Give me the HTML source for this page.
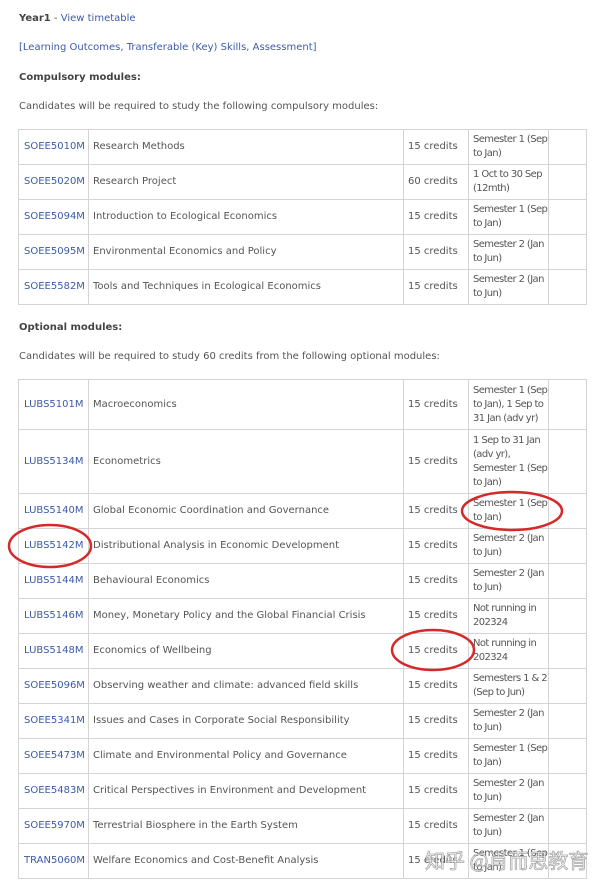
<!DOCTYPE html><html><head><meta charset="utf-8"><style>
body{margin:0;background:#fff;font-family:"DejaVu Sans","Liberation Sans",sans-serif;font-size:10px;color:#555;width:600px;height:887px;position:relative;overflow:hidden}
.t{position:absolute;left:19px;white-space:nowrap}
a{color:#3b5aa8;text-decoration:none}
b{color:#444}
table{position:absolute;left:18px;border-collapse:collapse;width:569px;table-layout:fixed}
td{border:1px solid #d4d4d4;padding:0 4px;vertical-align:middle;line-height:14px;font-size:10px;white-space:nowrap;overflow:hidden}
td.c1{color:#3b5aa8;padding-left:5px}
td:nth-child(4){padding-left:4px;padding-right:0;letter-spacing:-0.6px}
</style></head><body>
<div class="t" style="top:13px"><b>Year1</b> - <a>View timetable</a></div>
<div class="t" style="top:42px"><a>[Learning Outcomes, Transferable (Key) Skills, Assessment]</a></div>
<div class="t" style="top:72px"><b>Compulsory modules:</b></div>
<div class="t" style="top:101px">Candidates will be required to study the following compulsory modules:</div>
<table style="top:129px"><colgroup><col style="width:70px"><col style="width:315px"><col style="width:65px"><col style="width:80px"><col></colgroup>
<tr style="height:35px"><td class="c1">SOEE5010M</td><td>Research Methods</td><td>15 credits</td><td>Semester 1 (Sep<br>to Jan)</td><td></td></tr>
<tr style="height:35px"><td class="c1">SOEE5020M</td><td>Research Project</td><td>60 credits</td><td>1 Oct to 30 Sep<br>(12mth)</td><td></td></tr>
<tr style="height:35px"><td class="c1">SOEE5094M</td><td>Introduction to Ecological Economics</td><td>15 credits</td><td>Semester 1 (Sep<br>to Jan)</td><td></td></tr>
<tr style="height:35px"><td class="c1">SOEE5095M</td><td>Environmental Economics and Policy</td><td>15 credits</td><td>Semester 2 (Jan<br>to Jun)</td><td></td></tr>
<tr style="height:35px"><td class="c1">SOEE5582M</td><td>Tools and Techniques in Ecological Economics</td><td>15 credits</td><td>Semester 2 (Jan<br>to Jun)</td><td></td></tr>
</table>
<div class="t" style="top:322px"><b>Optional modules:</b></div>
<div class="t" style="top:351px">Candidates will be required to study 60 credits from the following optional modules:</div>
<table style="top:379px"><colgroup><col style="width:70px"><col style="width:315px"><col style="width:65px"><col style="width:80px"><col></colgroup>
<tr style="height:50px"><td class="c1">LUBS5101M</td><td>Macroeconomics</td><td>15 credits</td><td>Semester 1 (Sep<br>to Jan), 1 Sep to<br>31 Jan (adv yr)</td><td></td></tr>
<tr style="height:64px"><td class="c1">LUBS5134M</td><td>Econometrics</td><td>15 credits</td><td>1 Sep to 31 Jan<br>(adv yr),<br>Semester 1 (Sep<br>to Jan)</td><td></td></tr>
<tr style="height:35px"><td class="c1">LUBS5140M</td><td>Global Economic Coordination and Governance</td><td>15 credits</td><td>Semester 1 (Sep<br>to Jan)</td><td></td></tr>
<tr style="height:35px"><td class="c1">LUBS5142M</td><td>Distributional Analysis in Economic Development</td><td>15 credits</td><td>Semester 2 (Jan<br>to Jun)</td><td></td></tr>
<tr style="height:35px"><td class="c1">LUBS5144M</td><td>Behavioural Economics</td><td>15 credits</td><td>Semester 2 (Jan<br>to Jun)</td><td></td></tr>
<tr style="height:35px"><td class="c1">LUBS5146M</td><td>Money, Monetary Policy and the Global Financial Crisis</td><td>15 credits</td><td>Not running in<br>202324</td><td></td></tr>
<tr style="height:35px"><td class="c1">LUBS5148M</td><td>Economics of Wellbeing</td><td>15 credits</td><td>Not running in<br>202324</td><td></td></tr>
<tr style="height:35px"><td class="c1">SOEE5096M</td><td>Observing weather and climate: advanced field skills</td><td>15 credits</td><td>Semesters 1 &amp; 2<br>(Sep to Jun)</td><td></td></tr>
<tr style="height:35px"><td class="c1">SOEE5341M</td><td>Issues and Cases in Corporate Social Responsibility</td><td>15 credits</td><td>Semester 2 (Jan<br>to Jun)</td><td></td></tr>
<tr style="height:35px"><td class="c1">SOEE5473M</td><td>Climate and Environmental Policy and Governance</td><td>15 credits</td><td>Semester 1 (Sep<br>to Jan)</td><td></td></tr>
<tr style="height:35px"><td class="c1">SOEE5483M</td><td>Critical Perspectives in Environment and Development</td><td>15 credits</td><td>Semester 2 (Jan<br>to Jun)</td><td></td></tr>
<tr style="height:35px"><td class="c1">SOEE5970M</td><td>Terrestrial Biosphere in the Earth System</td><td>15 credits</td><td>Semester 2 (Jan<br>to Jun)</td><td></td></tr>
<tr style="height:35px"><td class="c1">TRAN5060M</td><td>Welfare Economics and Cost-Benefit Analysis</td><td>15 credits</td><td>Semester 1 (Sep<br>to Jan)</td><td></td></tr>
</table>
<svg width="600" height="887" style="position:absolute;left:0;top:0">
<g fill="none" stroke="#d42a2a" stroke-width="2.5">
<ellipse cx="512" cy="511" rx="50" ry="19"/>
<ellipse cx="50" cy="546" rx="41" ry="21"/>
<ellipse cx="433" cy="650" rx="41" ry="20"/>
</g>
<text x="425" y="868" font-family="Noto Sans CJK SC,sans-serif" font-size="20" fill="#fff" stroke="#999" stroke-width="0.8" opacity="0.85">知乎 @肖而思教育</text>
</svg>
</body></html>
